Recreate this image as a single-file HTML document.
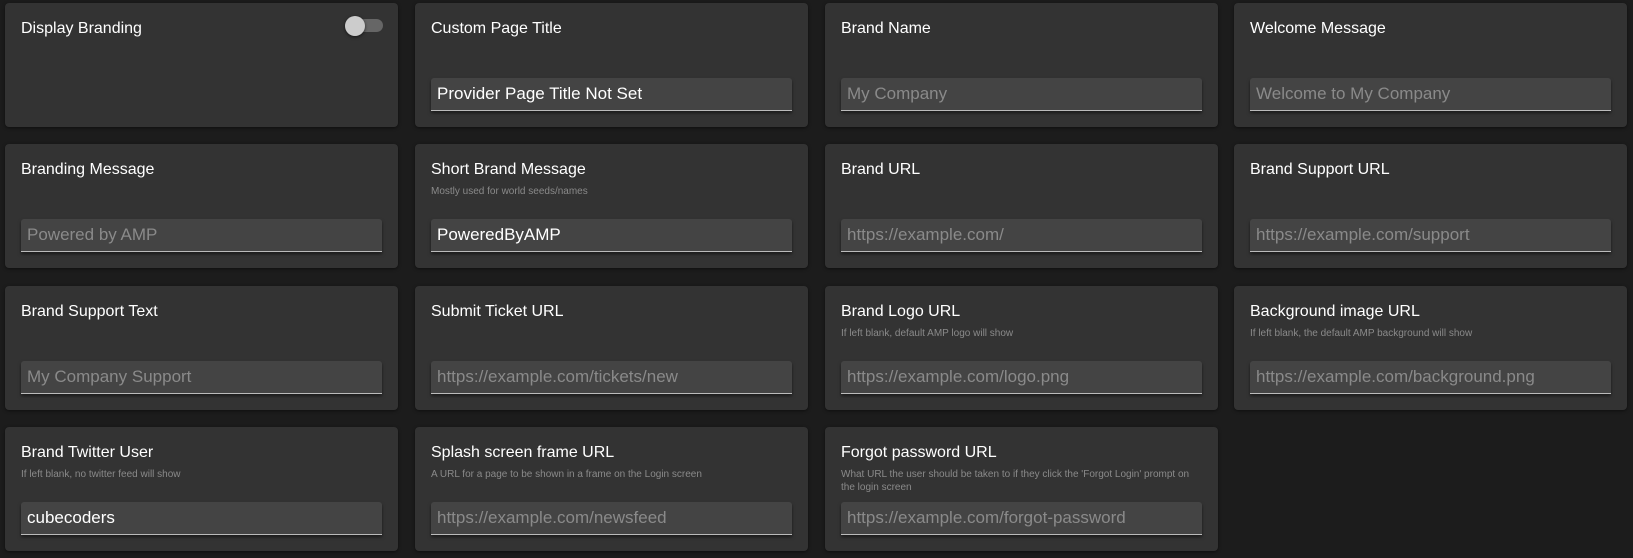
<!DOCTYPE html>
<html><head><meta charset="utf-8"><style>
body{margin:0;width:1633px;height:558px;background:#1c1c1c;font-family:"Liberation Sans",sans-serif;position:relative;overflow:hidden}
.c{position:absolute;width:393px;height:124px;background:#333;border-radius:4px;box-shadow:0 1px 3px rgba(0,0,0,.5)}
.t{position:absolute;left:16px;top:17px;font-size:16px;color:#fff}
.d{position:absolute;left:16px;top:41px;font-size:10px;color:#8a8a8a;width:362px;line-height:13px}
.i{position:absolute;left:16px;top:75px;width:361px;height:33px;background:#444;border-radius:3px 3px 0 0;border-bottom:1.5px solid #bbb;box-shadow:0 2px 3px rgba(0,0,0,.5);box-sizing:border-box;padding-left:6px;line-height:32px;font-size:17px;color:#8a8a8a}
.i.v{color:#fff}
.sw{position:absolute;left:340px;top:16px;width:38px;height:13px;border-radius:7px;background:#666}
.sw::before{content:"";position:absolute;left:0;top:-3.5px;width:20px;height:20px;border-radius:50%;background:#ccc;box-shadow:0 1px 3px rgba(0,0,0,.6)}
</style></head><body>
<div class="c" style="left:5px;top:3px"><div class="t">Display Branding</div><div class="sw"></div></div>
<div class="c" style="left:415px;top:3px"><div class="t">Custom Page Title</div><div class="i v">Provider Page Title Not Set</div></div>
<div class="c" style="left:825px;top:3px"><div class="t">Brand Name</div><div class="i">My Company</div></div>
<div class="c" style="left:1234px;top:3px"><div class="t">Welcome Message</div><div class="i">Welcome to My Company</div></div>

<div class="c" style="left:5px;top:144px"><div class="t">Branding Message</div><div class="i">Powered by AMP</div></div>
<div class="c" style="left:415px;top:144px"><div class="t">Short Brand Message</div><div class="d">Mostly used for world seeds/names</div><div class="i v">PoweredByAMP</div></div>
<div class="c" style="left:825px;top:144px"><div class="t">Brand URL</div><div class="i">https://example.com/</div></div>
<div class="c" style="left:1234px;top:144px"><div class="t">Brand Support URL</div><div class="i">https://example.com/support</div></div>

<div class="c" style="left:5px;top:286px"><div class="t">Brand Support Text</div><div class="i">My Company Support</div></div>
<div class="c" style="left:415px;top:286px"><div class="t">Submit Ticket URL</div><div class="i">https://example.com/tickets/new</div></div>
<div class="c" style="left:825px;top:286px"><div class="t">Brand Logo URL</div><div class="d">If left blank, default AMP logo will show</div><div class="i">https://example.com/logo.png</div></div>
<div class="c" style="left:1234px;top:286px"><div class="t">Background image URL</div><div class="d">If left blank, the default AMP background will show</div><div class="i">https://example.com/background.png</div></div>

<div class="c" style="left:5px;top:427px"><div class="t">Brand Twitter User</div><div class="d">If left blank, no twitter feed will show</div><div class="i v">cubecoders</div></div>
<div class="c" style="left:415px;top:427px"><div class="t">Splash screen frame URL</div><div class="d">A URL for a page to be shown in a frame on the Login screen</div><div class="i">https://example.com/newsfeed</div></div>
<div class="c" style="left:825px;top:427px"><div class="t">Forgot password URL</div><div class="d">What URL the user should be taken to if they click the 'Forgot Login' prompt on the login screen</div><div class="i">https://example.com/forgot-password</div></div>
</body></html>
